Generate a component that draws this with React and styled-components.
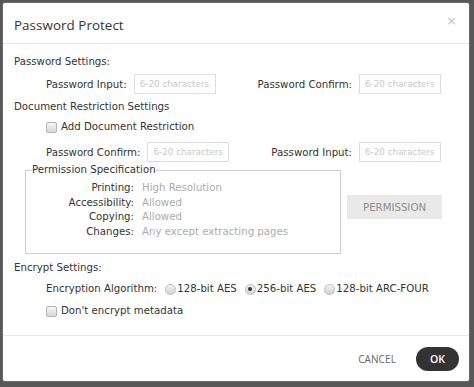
import React from "react";
import styled, { createGlobalStyle } from "styled-components";

const Global = createGlobalStyle`
  html, body { margin: 0; padding: 0; background: #585858; }
  * { box-sizing: border-box; }
`;

const Overlay = styled.div`
  width: 474px;
  height: 387px;
  padding: 3px 5px 6px 3px;
  background: #585858;
  overflow: hidden;
`;

const Dialog = styled.div`
  width: 466px;
  height: 378px;
  background: #fff;
  border-radius: 2px;
  box-shadow: 0 0 0 1px #6a6a6a;
  display: flex;
  flex-direction: column;
  font-family: "DejaVu Sans", Tahoma, sans-serif;
  font-size: 10.2px;
  color: #333;
`;

const Header = styled.div`
  height: 41px;
  flex: none;
  display: flex;
  align-items: center;
  justify-content: space-between;
  padding: 3px 12px 0 11px;
  border-bottom: 1px solid #e6e6e6;
`;

const Title = styled.h1`
  margin: 0;
  font-family: "Open Sans", sans-serif;
  font-weight: 400;
  font-size: 13.4px;
  color: #333;
  letter-spacing: 0.05px;
`;

const Close = styled.span`
  font-family: "DejaVu Sans", sans-serif;
  font-size: 13px;
  color: #c4c4c4;
  margin-top: -9px;
`;

const Body = styled.div`
  height: 292px;
  flex: none;
  padding: 0 11px;
  border-bottom: 1px solid #e6e6e6;
`;

const SectionTitle = styled.div`
  line-height: 14px;
  margin-top: ${(p) => p.$mt}px;
`;

const FieldRow = styled.div`
  display: flex;
  justify-content: space-between;
  align-items: center;
  height: 20px;
  margin-top: ${(p) => p.$mt}px;
  padding: 0 17px 0 32px;
`;

const Field = styled.label`
  display: flex;
  align-items: center;
  gap: 7px;
`;

const Input = styled.input`
  width: 82px;
  height: 20px;
  border: 1px solid #dcdcdc;
  padding: 0 4px 0 5px;
  font-family: "DejaVu Sans", sans-serif;
  font-size: 8.8px;
  color: #333;
  outline: none;
  &::placeholder { color: #c8c8c8; }
`;

const CheckRow = styled.label`
  display: flex;
  align-items: center;
  gap: 4px;
  line-height: 14px;
  margin-top: ${(p) => p.$mt}px;
  padding-left: 32px;
`;

const Box = styled.span`
  width: 11px;
  height: 11px;
  border: 1px solid #b4b4b4;
  border-radius: 2px;
  background: linear-gradient(#f6f6f6, #d8d8d8);
  flex: none;
`;

const PermRow = styled.div`
  display: flex;
  align-items: center;
  gap: 6px;
  margin-top: 1px;
  padding-left: 11px;
`;

const Fieldset = styled.fieldset`
  width: 316px;
  height: 91px;
  margin: 0;
  padding: 4px 0 0 0;
  border: 1px solid #cfcfcf;
`;

const Legend = styled.legend`
  margin-left: 6px;
  padding: 0;
  line-height: 14px;
  color: #333;
`;

const PermGrid = styled.div`
  display: grid;
  grid-template-columns: 108px auto;
  column-gap: 8px;
  line-height: 14.5px;
`;

const PermLabel = styled.span`
  text-align: right;
`;

const PermValue = styled.span`
  color: #ababab;
`;

const PermButton = styled.button`
  width: 95px;
  height: 24px;
  margin-top: -3px;
  border: none;
  background: #e9e9e9;
  color: #8e8e8e;
  font-family: "DejaVu Sans", sans-serif;
  font-size: 10.2px;
  padding: 0;
`;

const RadioRow = styled.div`
  display: flex;
  align-items: center;
  line-height: 14px;
  margin-top: ${(p) => p.$mt}px;
  padding-left: 32px;
`;

const RadioLabel = styled.span`
  margin-right: 8px;
`;

const RadioOpt = styled.label`
  display: flex;
  align-items: center;
  gap: 1px;
  margin-right: 8px;
`;

const Radio = styled.span`
  width: 11px;
  height: 11px;
  border-radius: 50%;
  border: 1px solid #bcbcbc;
  background: linear-gradient(#f3f3f3, #d2d2d2);
  display: flex;
  align-items: center;
  justify-content: center;
  flex: none;
  &::after {
    content: "";
    width: 4px;
    height: 4px;
    border-radius: 50%;
    background: ${(p) => (p.$on ? "#333" : "transparent")};
  }
`;

const Footer = styled.div`
  flex: 1;
  display: flex;
  align-items: center;
  justify-content: flex-end;
  gap: 20px;
  padding: 0 10px 0 0;
`;

const Cancel = styled.button`
  border: none;
  background: none;
  padding: 0;
  font-family: "Open Sans", sans-serif;
  font-size: 10px;
  color: #666;
  letter-spacing: 0.1px;
`;

const Ok = styled.button`
  width: 43px;
  height: 24px;
  border: none;
  border-radius: 12px;
  background: #333;
  color: #fff;
  font-family: "Open Sans", sans-serif;
  font-weight: 600;
  font-size: 10.5px;
  padding: 0;
`;

const perms = [
  ["Printing:", "High Resolution"],
  ["Accessibility:", "Allowed"],
  ["Copying:", "Allowed"],
  ["Changes:", "Any except extracting pages"],
];

export default function App() {
  return (
    <>
      <Global />
      <Overlay>
        <Dialog>
          <Header>
            <Title>Password Protect</Title>
            <Close>×</Close>
          </Header>
          <Body>
            <SectionTitle $mt={11}>Password Settings:</SectionTitle>
            <FieldRow $mt={5}>
              <Field>
                Password Input:
                <Input placeholder="6-20 characters" />
              </Field>
              <Field>
                Password Confirm:
                <Input placeholder="6-20 characters" />
              </Field>
            </FieldRow>
            <SectionTitle $mt={6}>Document Restriction Settings</SectionTitle>
            <CheckRow $mt={6}>
              <Box />
              Add Document Restriction
            </CheckRow>
            <FieldRow $mt={8}>
              <Field>
                Password Confirm:
                <Input placeholder="6-20 characters" />
              </Field>
              <Field>
                Password Input:
                <Input placeholder="6-20 characters" />
              </Field>
            </FieldRow>
            <PermRow>
              <Fieldset>
                <Legend>Permission Specification</Legend>
                <PermGrid>
                  {perms.map(([k, v]) => (
                    <React.Fragment key={k}>
                      <PermLabel>{k}</PermLabel>
                      <PermValue>{v}</PermValue>
                    </React.Fragment>
                  ))}
                </PermGrid>
              </Fieldset>
              <PermButton>PERMISSION</PermButton>
            </PermRow>
            <SectionTitle $mt={7}>Encrypt Settings:</SectionTitle>
            <RadioRow $mt={7}>
              <RadioLabel>Encryption Algorithm:</RadioLabel>
              <RadioOpt>
                <Radio />
                128-bit AES
              </RadioOpt>
              <RadioOpt>
                <Radio $on />
                256-bit AES
              </RadioOpt>
              <RadioOpt>
                <Radio />
                128-bit ARC-FOUR
              </RadioOpt>
            </RadioRow>
            <CheckRow $mt={8}>
              <Box />
              Don't encrypt metadata
            </CheckRow>
          </Body>
          <Footer>
            <Cancel>CANCEL</Cancel>
            <Ok>OK</Ok>
          </Footer>
        </Dialog>
      </Overlay>
    </>
  );
}
